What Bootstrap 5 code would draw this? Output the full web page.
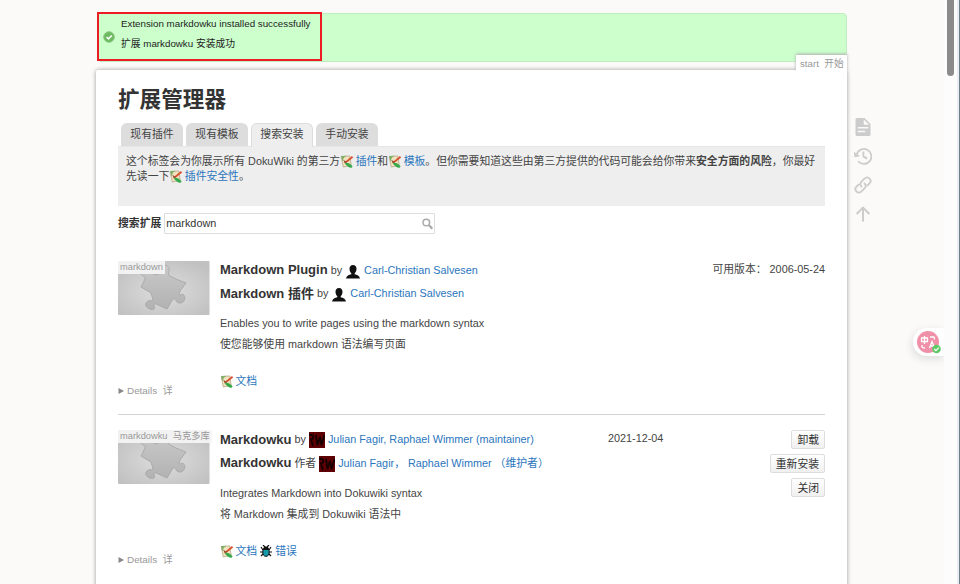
<!DOCTYPE html>
<html lang="zh-CN">
<head>
<meta charset="utf-8">
<meta name="viewport" content="width=device-width, initial-scale=1">
<title>扩展管理器</title>
<link href="https://cdn.jsdelivr.net/npm/bootstrap@5.3.0/dist/css/bootstrap.min.css" rel="stylesheet">
<style>
html,body{height:100%;overflow:hidden}
body{background:#fbfaf9;color:#444;font:10.83px/15px "Liberation Sans","Noto Sans CJK SC",sans-serif}
a{color:#2b76bd;text-decoration:none}
svg{flex:none;display:block}
.site{width:751px;height:584px;overflow:clip;overflow-clip-margin:8px;margin-left:96px;padding-top:13px}
.notice{height:49px;margin-left:1px;padding:0 0 0 23px;background:#cfc;border:1px solid #bfefbf;border-radius:4px;color:#222;font-size:9.78px;line-height:20px}
.notice-frame{left:-1px;top:-2px;width:225px;height:49px;border:2px solid #ed1c24}
.notice-icon{left:5px;top:17px}
.page-id{left:700px;top:-15px;width:51px;height:16px;background:#fff;color:#999;font-size:9.7px;line-height:17px;padding-left:4px;box-shadow:0 -1px 3px #aaa;clip-path:inset(-5px -5px 0 -5px)}
.sheet{margin-top:8px;height:560px;background:#fff;padding:0 22px;box-shadow:0 0 4px #999;border-radius:2px}
.sheet h1{font-size:21.6px;line-height:30px;font-weight:700;color:#333;margin:0;padding-top:15px}
.tabs{padding:8px 0 0 3px;gap:3px;height:30.5px}
.tabs a{width:62px;height:22.5px;background:#ddd;color:#444;border-radius:6px 6px 0 0;text-align:center;line-height:23px}
.tabs a.current{background:#eee;border:1px solid #ddd;border-bottom:0;line-height:21px;height:24px}
.intro{height:60px;background:#eee;border-top:1px solid #e6e6e6;padding:7px 8px}
.intro svg,.docs svg{display:inline-block;vertical-align:-3px}
.intro svg{margin-right:1.5px}
.find{height:21px;margin-top:7.5px;color:#333}
.find-box{width:271px;height:21px;border:1px solid #ddd;border-radius:1px;padding:0 1px 0 1px;margin-left:3px}
.ext{height:156.7px;border-bottom:1px solid #d4d4d4;margin-bottom:12.8px}
.ext:last-child{border:0}
.shot-col{width:102px}
.shot{width:92px;height:54px;margin-top:3px}
.shot-tag{left:0;top:0;height:13px;padding:0 2px;background:rgba(245,245,245,.92);color:#999;font-size:9.3px;line-height:13px;white-space:pre}
.more{margin-top:68px;color:#999;font-size:9.9px;white-space:pre}
.ext-title{height:23.6px;white-space:pre}
.ext-title b{font-size:13px;color:#333}
.ext-title span,.ext-title a{padding-top:1px}
.by{margin:0 4px 0 3px}
.av{margin:2px 3px 0 -1px}
.desc{line-height:21px;margin-top:8px}
.docs{margin-top:19px}
.docs svg{margin-right:1.5px}
.docs .bug{margin:0 3px 0 3px}
.act{background:linear-gradient(#fff,#f0f0f0);border:1px solid #ddd;border-radius:2px;height:19px;line-height:18px;padding:0 5px;color:#333;font-size:10.8px}
.actions{gap:5px;padding-top:3px;width:161px}
.date{width:56px}
.tools{left:854px;top:118px;gap:11px}
.track{left:944px;top:0;width:16px;height:584px;background:#fcfcfc;border-right:1px solid #6d7f8b;box-shadow:inset -2px 0 #e9edf0}
.thumb{left:3px;top:-6px;width:7px;height:82px;background:#8b8b8b;border-radius:4px}
.bubble{left:913px;top:328px;width:31px;height:28px;background:#fff;border-radius:14px 0 0 14px;box-shadow:-1px 3px 8px #ddd;clip-path:inset(-14px 0 -16px -14px)}
</style>
<script src="https://cdn.jsdelivr.net/npm/bootstrap@5.3.0/dist/js/bootstrap.bundle.min.js"></script>
</head>
<body>
<svg class="position-absolute" width="0" height="0">
 <defs><radialGradient id="sg" cx=".5" cy=".55" r=".62"><stop stop-color="#dedede"/><stop offset="1" stop-color="#c1c1c1"/></radialGradient><linearGradient id="pg" x2="0" y2="1"><stop stop-color="#c9c9c9"/><stop offset="1" stop-color="#b2b2b2"/></linearGradient></defs>
 <symbol id="doku" viewBox="0 0 14 14"><path d="M.8 1.800L10 1l1.500 10L3 13z" fill="#f0e2bf" stroke="#b3a47c" stroke-width=".8"/><path d="M.6 1.200l6-.4-3 2.200-1.500 4z" fill="#7fae68"/><path d="M4 8l2.500-.8L13 1.800" fill="none" stroke="#d9502f" stroke-width="2"/><path d="M3.500 5.500L5 8l2-.8" fill="none" stroke="#7a4a35" stroke-width="1"/><path d="M4.500 8.500c3-.5 6 .8 8.500 3.500l-1 1.800c-2.500.3-5.500-1.800-7.500-5.300z" fill="#35a84a"/></symbol>
 <symbol id="person" viewBox="0 0 14 14"><path d="M7 0c2.400 0 3.700 1.700 3.500 4.200-.2 1.900-.9 3.300-1.800 4v1C11 9.800 13.500 10.600 14 13.500H0C.5 10.600 3 9.800 5.300 9.200v-1c-.9-.7-1.600-2.100-1.800-4C3.300 1.700 4.600 0 7 0z" fill="#111"/></symbol>
 <symbol id="avatar" viewBox="0 0 16 16"><path d="M0 0h16v16H0z" fill="#5c0003"/><path d="M0 3h2c3 0 3 4 0 4.500L4 14M7 3l1.500 10 2.500-8 1.500 8 3-10" fill="none" stroke="#160000" stroke-width="1.800"/></symbol>
 <symbol id="bug" viewBox="0 0 12 12"><path d="M3 0l2 2M9 0L7 2M1 2l2 3M11 2L9 5M0 7h12M1 11l3-3M11 11L8 8" stroke="#111" stroke-width="1.200"/><ellipse cx="6" cy="7" rx="3.200" ry="4.300" fill="#159aaa" stroke="#111"/><path d="M3 5a3 3.500 0 0 1 6 0z" fill="#111"/></symbol>
 <symbol id="puzzle" viewBox="0 0 92 54"><rect width="91.500" height="54" rx="1" fill="url(#sg)"/><path d="M26 10 39 14C43 13 41 10 39 8 37 3 49 2 51 7 52 10 49 13 52 15L58 18 68 22 62 30C61 34 62 35 64 33 69 34 67 43 61 42 57 41 58 37 55 38L49 48 38 43C34 42 38 46 36 48 31 50 25 44 29 41 32 38 34 41 35 39L33 32 23 26 27 18C28 15 26 16 24 14 21 12 22 8 26 10Z" fill="url(#pg)" stroke="#a3a3a3" stroke-width=".8"/></symbol>
</svg>

<main class="site">
 <div class="notice position-relative">
  <div>Extension markdowku installed successfully</div>
  <div>扩展 markdowku 安装成功</div>
  <svg class="notice-icon position-absolute" width="12" height="12" viewBox="0 0 12 12"><circle cx="6" cy="6" r="5.300" fill="#6dbb60" stroke="#8bc681"/><path d="M3.500 6l2 1.800 3.300-3.300" fill="none" stroke="#fff" stroke-width="1.600"/></svg>
  <div class="notice-frame position-absolute"></div>
 </div>
 <div class="sheet position-relative">
  <div class="page-id position-absolute text-nowrap">start&nbsp; 开始</div>
  <h1>扩展管理器</h1>
  <nav class="tabs d-flex"><a href="#">现有插件</a><a href="#">现有模板</a><a href="#" class="current">搜索安装</a><a href="#">手动安装</a></nav>
  <div class="intro">这个标签会为你展示所有 DokuWiki 的第三方<svg width="14" height="13"><use href="#doku"/></svg><a href="#">插件</a>和<svg width="14" height="13"><use href="#doku"/></svg><a href="#">模板</a>。但你需要知道这些由第三方提供的代码可能会给你带来<b>安全方面的风险</b>，你最好<br>先读一下<svg width="14" height="13"><use href="#doku"/></svg><a href="#">插件安全性</a>。</div>
  <div class="find d-flex align-items-center"><b>搜索扩展</b><div class="find-box d-flex align-items-center justify-content-between"><span>markdown</span><svg width="11" height="12" viewBox="0 0 11 12"><circle cx="4.300" cy="4.500" r="3.300" fill="none" stroke="#aaa" stroke-width="1.500"/><path d="M7 7.200l3.300 3.500" stroke="#aaa" stroke-width="2.200"/></svg></div></div>

  <section class="ext d-flex mt-4">
   <div class="shot-col"><div class="shot position-relative"><svg width="92" height="54"><use href="#puzzle"/></svg><span class="shot-tag position-absolute">markdown</span></div><div class="more d-flex align-items-center"><svg width="9" height="8" viewBox="0 0 9 8"><path d="M.5 1v6l5.500-3z" fill="#888"/></svg>Details  详</div></div>
   <div class="flex-grow-1">
    <div class="ext-title d-flex align-items-center"><b>Markdown Plugin</b><span class="by">by</span><svg width="14" height="14" class="mt-1 me-1"><use href="#person"/></svg><a href="#">Carl-Christian Salvesen</a></div>
    <div class="ext-title d-flex align-items-center"><b>Markdown 插件</b><span class="by">by</span><svg width="14" height="14" class="mt-1 me-1"><use href="#person"/></svg><a href="#">Carl-Christian Salvesen</a></div>
    <div class="desc">Enables you to write pages using the markdown syntax<br>使您能够使用 markdown 语法编写页面</div>
    <div class="docs d-flex align-items-center"><svg width="14" height="13"><use href="#doku"/></svg><a href="#">文档</a></div>
   </div>
   <div class="pt-1 text-nowrap">可用版本：&nbsp;2006-05-24</div>
  </section>

  <section class="ext d-flex">
   <div class="shot-col"><div class="shot position-relative"><svg width="92" height="54"><use href="#puzzle"/></svg><span class="shot-tag position-absolute">markdowku  马克多库</span></div><div class="more d-flex align-items-center"><svg width="9" height="8" viewBox="0 0 9 8"><path d="M.5 1v6l5.500-3z" fill="#888"/></svg>Details  详</div></div>
   <div class="flex-grow-1">
    <div class="ext-title d-flex align-items-center"><b>Markdowku</b><span class="by">by</span><svg width="16" height="16" class="av"><use href="#avatar"/></svg><a href="#">Julian Fagir, Raphael Wimmer (maintainer)</a></div>
    <div class="ext-title d-flex align-items-center"><b>Markdowku</b><span class="by">作者</span><svg width="16" height="16" class="av"><use href="#avatar"/></svg><a href="#">Julian Fagir， Raphael Wimmer （维护者）</a></div>
    <div class="desc">Integrates Markdown into Dokuwiki syntax<br>将 Markdown 集成到 Dokuwiki 语法中</div>
    <div class="docs d-flex align-items-center"><svg width="14" height="13"><use href="#doku"/></svg><a href="#">文档</a><svg width="12" height="12" class="bug"><use href="#bug"/></svg><a href="#">错误</a></div>
   </div>
   <div class="date pt-1 text-nowrap">2021-12-04</div>
   <div class="actions d-flex flex-column align-items-end"><button class="act">卸载</button><button class="act">重新安装</button><button class="act">关闭</button></div>
  </section>
 </div>
</main>

<nav class="tools position-fixed d-flex flex-column">
 <svg width="18" height="18" viewBox="0 0 24 24" fill="#ccc"><path d="M14 0H4a2 2 0 0 0-2 2v20a2 2 0 0 0 2 2h16a2 2 0 0 0 2-2V8zM13 2l7 7h-7zM5 12h14v2H5zm0 5h10v2H5z" fill-rule="evenodd"/></svg>
 <svg width="18" height="18" viewBox="0 0 24 24" fill="none" stroke="#ccc" stroke-width="2.400"><path d="M3.500 10a10 10 0 1 1 2 9M12.500 6v6.500l5 3"/><path d="M0 7l1 6 6-1z" fill="#ccc" stroke-width="1"/></svg>
 <svg width="18" height="18" viewBox="0 0 24 24" fill="none" stroke="#ccc" stroke-width="2.400" stroke-linecap="round"><path d="M10 14c-2-2-2-4.500 0-6.500l4-4c5-4.500 11 2 6.500 6.500l-2.500 2.500M14 10c2 2 2 4.500 0 6.500l-4 4c-5 4.500-11-2-6.500-6.500L6 11.500"/></svg>
 <svg width="18" height="18" viewBox="0 0 24 24" fill="none" stroke="#ccc" stroke-width="2.600"><path d="M12 22V4M3.500 12L12 3.500l8.500 8.500"/></svg>
</nav>
<div class="bubble position-fixed"><svg width="31" height="28" viewBox="0 0 31 28"><circle cx="15" cy="14" r="11" fill="#f08fa8"/><path d="M8.500 10h6v3.500h-6zM11.500 8v8M17 9h3.500q1 0 1 2.500M9 17v1.500q0 1.500 3 1.500M16.500 20l2.500-6.500 2.500 6.500M17.500 18h3" fill="none" stroke="#fff" stroke-width="1.300"/><circle cx="23.500" cy="21" r="4.300" fill="#5fcb68"/><path d="M21.300 21l1.600 1.600 2.900-3" fill="none" stroke="#fff" stroke-width="1.200"/></svg></div>
<div class="track position-fixed"><div class="thumb position-absolute"></div></div>
</body>
</html>
